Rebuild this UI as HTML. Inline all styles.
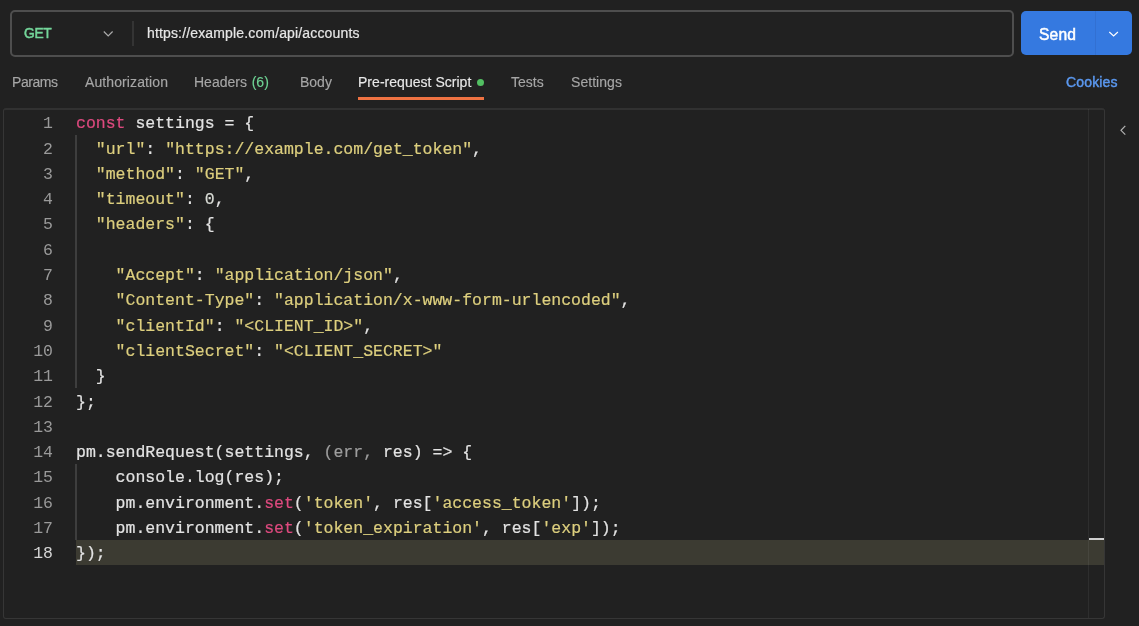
<!DOCTYPE html>
<html><head><meta charset="utf-8">
<style>
html,body{margin:0;padding:0;}
body{-webkit-font-smoothing:antialiased;width:1139px;height:626px;background:#212121;position:relative;overflow:hidden;font-family:"Liberation Sans",sans-serif;}
.a{position:absolute;white-space:pre;will-change:transform;}
.urlbox{position:absolute;left:10px;top:10px;width:1000px;height:43px;border:2px solid #4e4e4e;border-radius:5px;}
.get{left:23.8px;top:26.1px;letter-spacing:-0.35px;font-size:13.8px;font-weight:normal;-webkit-text-stroke:0.5px currentColor;color:#74d69a;line-height:16px;}
.url{left:147px;top:25px;font-size:14px;color:#e6e6e6;line-height:16px;letter-spacing:0.15px;-webkit-text-stroke:0.2px currentColor;}
.vdiv{position:absolute;left:132px;top:21px;width:2px;height:25px;background:#343434;}
.send{position:absolute;left:1021.4px;top:11.4px;width:110.2px;height:44.1px;background:#3579e0;border-radius:5px;}
.sdiv{position:absolute;left:1095px;top:11.4px;width:1px;height:44.1px;background:#3270d2;}
.sendt{left:1039.1px;top:25.6px;font-size:15.6px;font-weight:normal;-webkit-text-stroke:0.5px currentColor;letter-spacing:0.2px;color:#fff;line-height:17px;}
.tab{top:74px;font-size:14px;color:#a6a6a6;line-height:16px;-webkit-text-stroke:0.15px currentColor;}
.editor{position:absolute;left:3px;top:108px;width:1100px;height:508px;border:1px solid #363636;border-top:2px solid #313131;border-radius:3px;}
.code{position:absolute;left:76px;top:110px;will-change:transform;-webkit-text-stroke:0.2px currentColor;font-family:"Liberation Mono",monospace;font-size:16.5px;color:#e3e3e3;}
.ln{position:absolute;will-change:transform;left:0;width:53px;text-align:right;font-family:"Liberation Mono",monospace;font-size:16.48px;color:#9a9a9a;}
.l{position:absolute;left:76px;height:25.3px;line-height:25.3px;white-space:pre;}
.cur{color:#d6d6d6}
.k{color:#de4a7f}.s{color:#ddcf7e}.g{color:#9e9e9e}.n{color:#d9dcd6}
</style></head><body>
<div class="urlbox"></div>
<div class="a get">GET</div>
<svg class="a" style="left:102px;top:30px" width="12" height="8" viewBox="0 0 12 8"><path d="M1.8 1.5 L6.2 5.9 L10.6 1.5" fill="none" stroke="#ababab" stroke-width="1.2"/></svg>
<div class="vdiv"></div>
<div class="a url">https://example.com/api/accounts</div>
<div class="send"></div>
<div class="sdiv"></div>
<div class="a sendt">Send</div>
<svg class="a" style="left:1108px;top:29px" width="12" height="9" viewBox="0 0 12 9"><path d="M1.3 3 L5.6 6.9 L9.9 3" fill="none" stroke="#ffffff" stroke-width="1.15"/></svg>

<div class="a tab" style="left:12px;letter-spacing:-0.45px">Params</div>
<div class="a tab" style="left:85px;letter-spacing:0.1px">Authorization</div>
<div class="a tab" style="left:194px">Headers <span style="color:#6fd495;margin-left:0.9px">(6)</span></div>
<div class="a tab" style="left:300px">Body</div>
<div class="a tab" style="left:357.6px;color:#e8e8e8;letter-spacing:0.03px">Pre-request Script</div>
<div class="a" style="left:477.2px;top:78.5px;width:7px;height:7px;border-radius:50%;background:#52bf62"></div>
<div class="a" style="left:358px;top:97px;width:126px;height:3px;background:#ee7242"></div>
<div class="a tab" style="left:511px">Tests</div>
<div class="a tab" style="left:570.5px;letter-spacing:0.05px">Settings</div>
<div class="a tab" style="left:1066px;color:#5b98ef;-webkit-text-stroke:0.45px currentColor;letter-spacing:0.15px;margin-left:0.3px">Cookies</div>

<div class="editor"></div>
<svg class="a" style="left:1117px;top:123px" width="12" height="14" viewBox="0 0 12 14"><path d="M8.3 2.8 L4 7.3 L8.3 11.6" fill="none" stroke="#b3b3b3" stroke-width="1.2"/></svg>

<div class="a" style="left:76px;top:540px;width:1028px;height:25px;background:#3c3b32"></div>
<div class="a" style="left:75px;top:135.3px;width:2px;height:253px;background:#3e3e3e"></div>
<div class="a" style="left:75px;top:464.2px;width:2px;height:75.9px;background:#3e3e3e"></div>
<div class="a" style="left:1089px;top:538px;width:15px;height:2px;background:#cfcfcf"></div>
<div class="a" style="left:1088px;top:109px;width:1px;height:509px;background:rgba(255,255,255,0.06)"></div>
<!--CODE-->
<div class="ln" style="top:111.2px;line-height:25.3px">1</div>
<div class="l code" style="top:111.2px"><span class="k">const</span> settings = {</div>
<div class="ln" style="top:136.5px;line-height:25.3px">2</div>
<div class="l code" style="top:136.5px">  <span class="s">&quot;url&quot;</span>: <span class="s">&quot;https://example.com/get_token&quot;</span>,</div>
<div class="ln" style="top:161.8px;line-height:25.3px">3</div>
<div class="l code" style="top:161.8px">  <span class="s">&quot;method&quot;</span>: <span class="s">&quot;GET&quot;</span>,</div>
<div class="ln" style="top:187.1px;line-height:25.3px">4</div>
<div class="l code" style="top:187.1px">  <span class="s">&quot;timeout&quot;</span>: <span class="n">0</span>,</div>
<div class="ln" style="top:212.4px;line-height:25.3px">5</div>
<div class="l code" style="top:212.4px">  <span class="s">&quot;headers&quot;</span>: {</div>
<div class="ln" style="top:237.7px;line-height:25.3px">6</div>
<div class="l code" style="top:237.7px"></div>
<div class="ln" style="top:263.0px;line-height:25.3px">7</div>
<div class="l code" style="top:263.0px">    <span class="s">&quot;Accept&quot;</span>: <span class="s">&quot;application/json&quot;</span>,</div>
<div class="ln" style="top:288.3px;line-height:25.3px">8</div>
<div class="l code" style="top:288.3px">    <span class="s">&quot;Content-Type&quot;</span>: <span class="s">&quot;application/x-www-form-urlencoded&quot;</span>,</div>
<div class="ln" style="top:313.6px;line-height:25.3px">9</div>
<div class="l code" style="top:313.6px">    <span class="s">&quot;clientId&quot;</span>: <span class="s">&quot;&lt;CLIENT_ID&gt;&quot;</span>,</div>
<div class="ln" style="top:338.9px;line-height:25.3px">10</div>
<div class="l code" style="top:338.9px">    <span class="s">&quot;clientSecret&quot;</span>: <span class="s">&quot;&lt;CLIENT_SECRET&gt;&quot;</span></div>
<div class="ln" style="top:364.2px;line-height:25.3px">11</div>
<div class="l code" style="top:364.2px">  }</div>
<div class="ln" style="top:389.5px;line-height:25.3px">12</div>
<div class="l code" style="top:389.5px">};</div>
<div class="ln" style="top:414.8px;line-height:25.3px">13</div>
<div class="l code" style="top:414.8px"></div>
<div class="ln" style="top:440.1px;line-height:25.3px">14</div>
<div class="l code" style="top:440.1px">pm.sendRequest(settings, <span class="g">(err, </span>res) =&gt; {</div>
<div class="ln" style="top:465.4px;line-height:25.3px">15</div>
<div class="l code" style="top:465.4px">    console.log(res);</div>
<div class="ln" style="top:490.7px;line-height:25.3px">16</div>
<div class="l code" style="top:490.7px">    pm.environment.<span class="k">set</span>(<span class="s">&#x27;token&#x27;</span>, res[<span class="s">&#x27;access_token&#x27;</span>]);</div>
<div class="ln" style="top:516.0px;line-height:25.3px">17</div>
<div class="l code" style="top:516.0px">    pm.environment.<span class="k">set</span>(<span class="s">&#x27;token_expiration&#x27;</span>, res[<span class="s">&#x27;exp&#x27;</span>]);</div>
<div class="ln cur" style="top:541.3px;line-height:25.3px">18</div>
<div class="l code" style="top:541.3px">});</div>
<!--/CODE-->
</body></html>
